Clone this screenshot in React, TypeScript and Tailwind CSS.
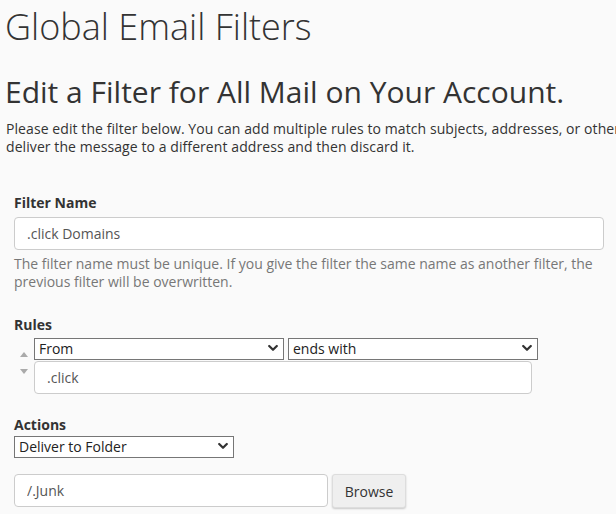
import React from 'react';

function Chevron() {
  return (
    <svg className="pointer-events-none absolute right-[6px] top-1/2 -translate-y-1/2 w-[10px] h-[7px]" viewBox="0 0 10 7" fill="none">
      <path d="M1.2 1.5l3.8 3.8 3.8-3.8" stroke="#333" strokeWidth="2.2" strokeLinecap="round" strokeLinejoin="round" />
    </svg>
  );
}

function Select({ value, width }: { value: string; width: string }) {
  return (
    <div className={`relative ${width}`}>
      <select
        defaultValue={value}
        className="w-full h-[22px] appearance-none border border-[#767676] bg-white pl-[4px] text-[14px] leading-[20px] text-[#222] outline-none"
      >
        <option>{value}</option>
      </select>
      <Chevron />
    </div>
  );
}

export default function App() {
  return (
    <div className="min-h-screen w-full overflow-hidden bg-[#fafafa] text-[#333] font-['Open_Sans',sans-serif]">
      <h1 className="pl-[5px] pt-[7px] text-[36px] font-light leading-[40px] whitespace-nowrap">Global Email Filters</h1>

      <h2 className="mt-[28px] pl-[5px] text-[30px] leading-[34px] whitespace-nowrap">Edit a Filter for All Mail on Your Account.</h2>
      <p className="mt-[11px] pl-[6px] text-[14px] leading-[18px] tracking-[0.08px] whitespace-nowrap">
        Please edit the filter below. You can add multiple rules to match subjects, addresses, or other parts of the message. You can then add multiple actions to take on a message such as to
        <br />
        deliver the message to a different address and then discard it.
      </p>

      <div className="mt-[37px] pl-[14px] w-[604px]">
        {/* Filter name */}
        <label className="block text-[14px] font-bold leading-[20px]">Filter Name</label>
        <input
          defaultValue=".click Domains"
          className="mt-[4px] block w-full h-[33px] rounded-[4px] border border-[#ccc] bg-white px-[12px] text-[14px] text-[#555] outline-none"
        />
        <p className="mt-[5px] text-[14px] leading-[18px] text-[#777]">
          The filter name must be unique. If you give the filter the same name as another filter, the previous filter will be overwritten.
        </p>

        {/* Rules */}
        <label className="mt-[24px] block text-[14px] font-bold leading-[20px]">Rules</label>
        <div className="mt-[1px] flex">
          <div className="w-[20px] flex flex-col items-center pt-[16px] gap-[12px]">
            <span className="block w-0 h-0 border-x-[4px] border-x-transparent border-b-[5px] border-b-[#aaa]" />
            <span className="block w-0 h-0 border-x-[4px] border-x-transparent border-t-[5px] border-t-[#aaa]" />
          </div>
          <div className="flex flex-col gap-[1px]">
            <div className="flex gap-[4px]">
              <Select value="From" width="w-[250px]" />
              <Select value="ends with" width="w-[250px]" />
            </div>
            <input
              defaultValue=".click"
              className="block w-[498px] h-[33px] rounded-[4px] border border-[#ccc] bg-white px-[12px] text-[14px] text-[#555] outline-none"
            />
          </div>
        </div>

        {/* Actions */}
        <label className="mt-[21px] block text-[14px] font-bold leading-[20px]">Actions</label>
        <div className="-mt-[1px]">
          <Select value="Deliver to Folder" width="w-[220px]" />
        </div>
        <div className="mt-[16px] flex gap-[4px]">
          <input
            defaultValue="/.Junk"
            className="block w-[314px] h-[33px] rounded-[4px] border border-[#ccc] bg-white px-[12px] text-[14px] text-[#555] outline-none"
          />
          <button className="h-[34px] w-[74px] rounded-[3px] border border-[#ddd] bg-[#efefef] text-[14px] text-[#333] shadow-[0_1px_2px_rgba(0,0,0,0.2)]">
            Browse
          </button>
        </div>
      </div>
    </div>
  );
}
